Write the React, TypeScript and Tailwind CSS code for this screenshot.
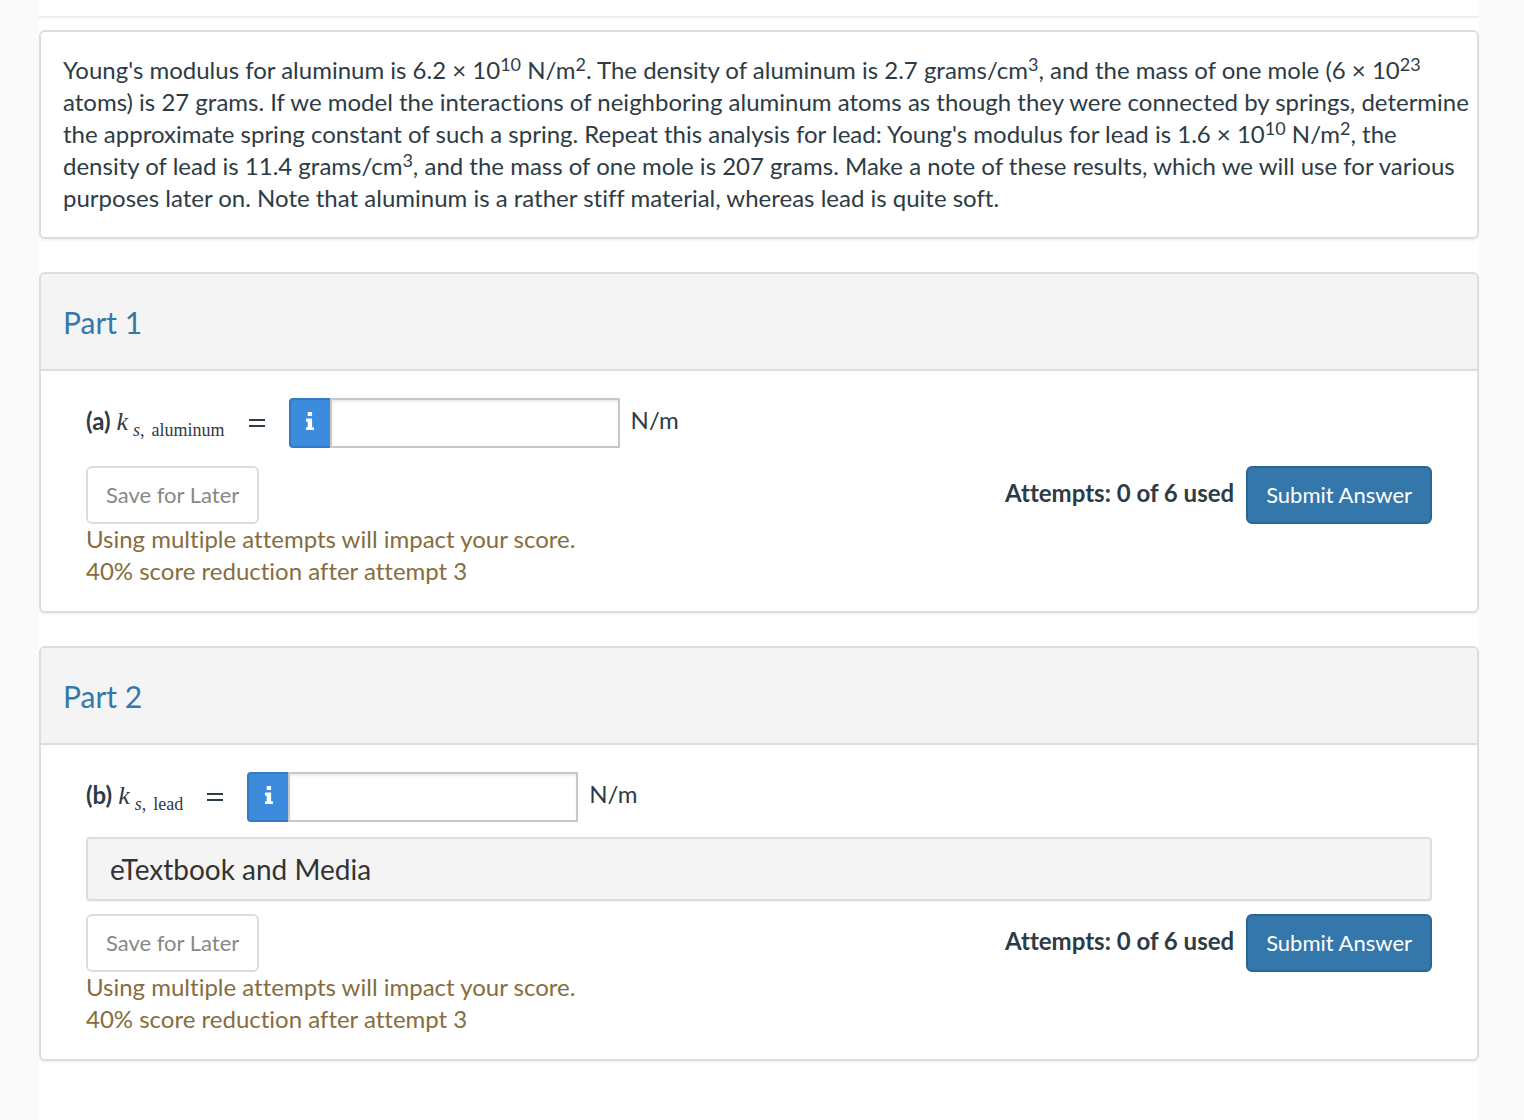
import type { ReactNode } from "react";

function Sup({ children }: { children: ReactNode }) {
  return <sup className="relative -top-2 align-baseline text-[18px] leading-none">{children}</sup>;
}

function InfoIcon() {
  return (
    <svg viewBox="0 0 8 18" className="h-[18px] w-2" fill="currentColor" aria-hidden="true">
      <path d="M2.2 0h3.4q.5 0 .5.5v3q0 .5-.5.5H2.2q-.5 0-.5-.5v-3q0-.5.5-.5ZM.5 6.5h5q.6 0 .6.6v8.1h1.3q.6 0 .6.6v1.6q0 .6-.6.6H.6q-.6 0-.6-.6v-1.6q0-.6.6-.6h1.1V9.7H.5q-.5 0-.5-.6v-2q0-.6.5-.6Z" />
    </svg>
  );
}

function AnswerRow({ id, label, subscript }: { id: string; label: string; subscript: string }) {
  return (
    <div className="flex h-[50px] items-center">
      <label htmlFor={id} className="flex items-baseline pb-1 whitespace-nowrap">
        <b>{label}</b>
        <span className="ml-[6px] font-['Liberation_Serif',serif] text-[26px] italic">k</span>
        <sub className="relative top-[6px] ml-[5px] align-baseline font-['Liberation_Serif',serif] text-[18px] leading-none">
          <i>s</i>,<span className="ml-[7px]">{subscript}</span>
        </sub>
      </label>
      <svg viewBox="0 0 16 10" className="mx-6 h-[10px] w-4 shrink-0" fill="currentColor" aria-label="equals">
        <path d="M0 1h16v2H0zM0 7h16v2H0z" />
      </svg>
      <div className="flex h-[50px]">
        <button
          type="button"
          aria-label="Answer information"
          className="flex w-[41px] items-center justify-center rounded-l-[4px] border-2 border-r-0 border-[#337ac4] bg-[#3d8bdc] pb-1 text-white"
        >
          <InfoIcon />
        </button>
        <input
          id={id}
          type="text"
          className="w-[290px] border-2 border-[#c8c8c8] bg-white px-3 shadow-[inset_0_2px_2px_rgba(0,0,0,0.08)] outline-none"
        />
      </div>
      <span className="ml-[11px] pb-[6px]">N/m</span>
    </div>
  );
}

function Actions() {
  return (
    <>
      <div className="flex h-[58px] items-center justify-between">
        <button type="button" className="h-[58px] rounded-[6px] border-2 border-[#dddddd] bg-white px-[18px] text-[22px] text-[#888888]">
          Save for Later
        </button>
        <div className="flex items-center gap-3">
          <b className="pb-1">Attempts: 0 of 6 used</b>
          <button type="button" className="h-[58px] rounded-[6px] border-2 border-[#2b6594] bg-[#3477aa] px-[18px] text-[22px] text-white">
            Submit Answer
          </button>
        </div>
      </div>
      <p className="-mt-px text-[#866d3d]">
        Using multiple attempts will impact your score.
        <br />
        40% score reduction after attempt 3
      </p>
    </>
  );
}

function Part({ title, children }: { title: string; children: ReactNode }) {
  return (
    <section className="overflow-hidden rounded-[6px] border-2 border-[#dddddd] bg-white shadow-[0_2px_2px_rgba(0,0,0,0.05)]">
      <h2 className="border-b-2 border-[#dddddd] bg-[#f4f4f4] px-[22px] pt-8 pb-[31px] text-[30px] leading-8">
        <a href="#" className="text-[#3477aa]">{title}</a>
      </h2>
      <div className="px-[45px] pt-[27px] pb-6">{children}</div>
    </section>
  );
}

export default function App() {
  return (
    <div className="min-h-screen bg-[#fafafa] pr-[45px] pl-[39px] font-['Lato',sans-serif] text-[24px] leading-8 text-[#2d3b45] [font-variant-ligatures:none]">
      <main className="min-h-screen bg-white pt-4">
        <hr className="border-t-2 border-[#eeeeee]" />
        <section className="mt-3 rounded-[6px] border-2 border-[#dddddd] bg-white pt-[22px] pr-1 pb-[23px] pl-[22px] shadow-[0_2px_2px_rgba(0,0,0,0.05)]">
          <p>
            Young's modulus for aluminum is 6.2 × 10<Sup>10</Sup> N/m<Sup>2</Sup>. The density of aluminum is 2.7
            grams/cm<Sup>3</Sup>, and the mass of one mole (6 × 10<Sup>23</Sup> atoms) is 27 grams. If we model the
            interactions of neighboring aluminum atoms as though they were connected by springs, determine the
            approximate spring constant of such a spring. Repeat this analysis for lead: Young's modulus for lead is
            1.6 × 10<Sup>10</Sup> N/m<Sup>2</Sup>, the density of lead is 11.4 grams/cm<Sup>3</Sup>, and the mass of
            one mole is 207 grams. Make a note of these results, which we will use for various purposes later on. Note
            that aluminum is a rather stiff material, whereas lead is quite soft.
          </p>
        </section>
        <div className="mt-[33px] flex flex-col gap-[33px]">
          <Part title="Part 1">
            <AnswerRow id="answer-a" label="(a)" subscript="aluminum" />
            <div className="mt-[18px]">
              <Actions />
            </div>
          </Part>
          <Part title="Part 2">
            <AnswerRow id="answer-b" label="(b)" subscript="lead" />
            <button
              type="button"
              className="mt-[15px] mb-[13px] block w-full rounded-[4px] border-2 border-[#dddddd] bg-[#f4f4f4] px-[22px] py-3 text-left text-[28px] leading-9 text-[#333333] shadow-[0_1px_1px_rgba(0,0,0,0.05)]"
            >
              eTextbook and Media
            </button>
            <Actions />
          </Part>
        </div>
      </main>
    </div>
  );
}
